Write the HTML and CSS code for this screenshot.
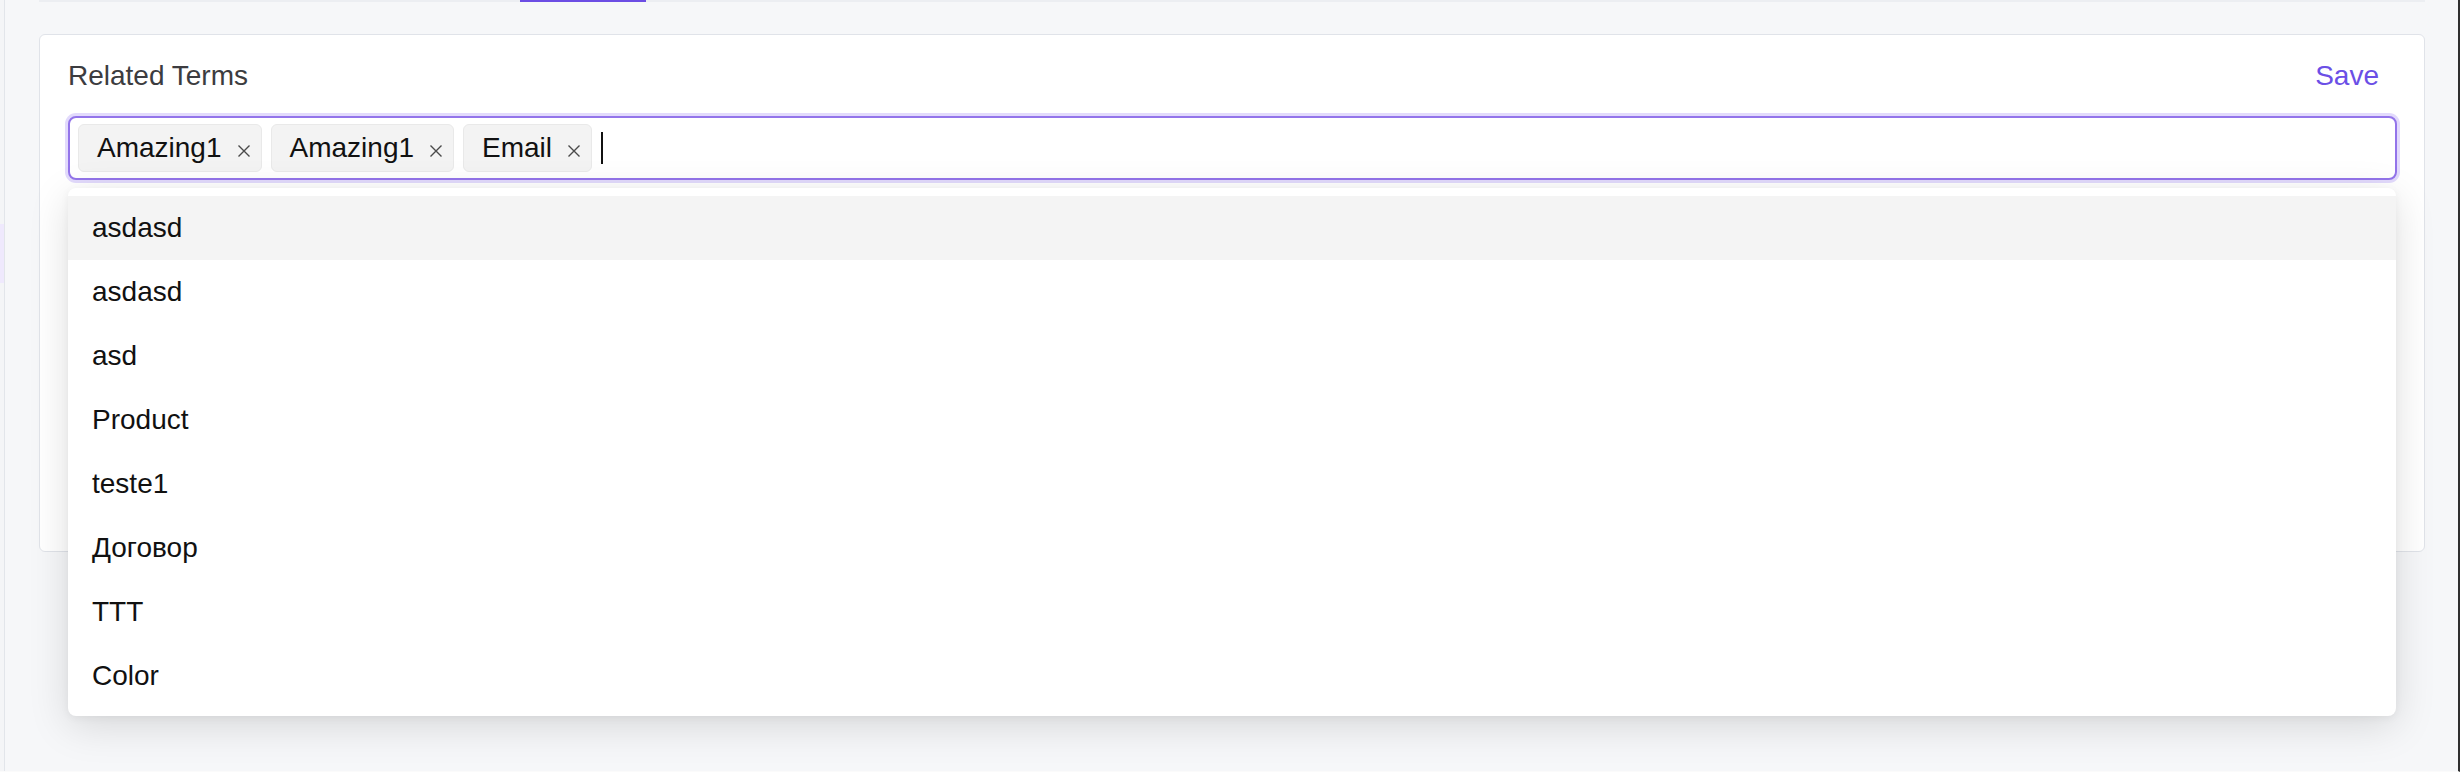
FILE: index.html
```html
<!DOCTYPE html>
<html lang="en">
<head>
<meta charset="utf-8">
<title>Related Terms</title>
<link rel="stylesheet" href="styles.css">
</head>
<body>
<div class="frame">
  <aside class="sidebar">
    <div class="sidebar-active"></div>
  </aside>
  <main class="main">
    <div class="tabs"><div class="tab-indicator"></div></div>
    <section class="card">
      <div class="card-header">
        <span class="card-title">Related Terms</span>
        <span class="save">Save</span>
      </div>
      <div class="tag-input">
        <span class="tag"><span class="tag-label">Amazing1</span><svg class="tag-x" width="14" height="14" viewBox="0 0 14 14"><path d="M1.5 1.5 L12.5 12.5 M12.5 1.5 L1.5 12.5" stroke="#4a4a4a" stroke-width="1.4" fill="none"/></svg></span>
        <span class="tag"><span class="tag-label">Amazing1</span><svg class="tag-x" width="14" height="14" viewBox="0 0 14 14"><path d="M1.5 1.5 L12.5 12.5 M12.5 1.5 L1.5 12.5" stroke="#4a4a4a" stroke-width="1.4" fill="none"/></svg></span>
        <span class="tag"><span class="tag-label">Email</span><svg class="tag-x" width="14" height="14" viewBox="0 0 14 14"><path d="M1.5 1.5 L12.5 12.5 M12.5 1.5 L1.5 12.5" stroke="#4a4a4a" stroke-width="1.4" fill="none"/></svg></span>
        <span class="caret"></span>
        <ul class="dropdown">
          <li class="option active">asdasd</li>
          <li class="option">asdasd</li>
          <li class="option">asd</li>
          <li class="option">Product</li>
          <li class="option">teste1</li>
          <li class="option">Договор</li>
          <li class="option">TTT</li>
          <li class="option">Color</li>
        </ul>
      </div>
    </section>
  </main>
</div>
</body>
</html>
```

FILE: styles.css
```css
html, body {
  margin: 0;
  padding: 0;
}
body {
  background: #f6f7f9;
  font-family: "Liberation Sans", Arial, sans-serif;
  font-size: 28px;
  color: #111;
  overflow: hidden;
}
.frame {
  display: flex;
  height: 772px;
  box-sizing: border-box;
  border-right: 2px solid #2f2f2f;
  border-bottom: 1px solid #fbfbfb;
}
.sidebar {
  width: 4px;
  flex: none;
  background: #f4f5f7;
  border-right: 1px solid #e2e5ea;
}
.sidebar-active {
  margin-top: 224px;
  height: 59px;
  background: #efe9fd;
}
.main {
  flex: 1;
  padding: 0 33px 0 34px;
}
.tabs {
  height: 2px;
  background: #eceef2;
  margin-bottom: 32px;
  display: flex;
}
.tab-indicator {
  margin-left: 481px;
  width: 126px;
  height: 2px;
  background: #6c4de4;
}
.card {
  background: #fff;
  border: 1px solid #e0e3e9;
  border-radius: 6px;
  box-sizing: border-box;
  min-height: 518px;
  padding: 25px 27px 0 28px;
}
.card-header {
  display: flex;
  justify-content: space-between;
  align-items: center;
  height: 32px;
  line-height: 32px;
  margin-bottom: 24px;
}
.card-title {
  color: #3c3c40;
}
.save {
  color: #6b4fe6;
  margin-right: 18px;
}
.tag-input {
  position: relative;
  display: flex;
  align-items: center;
  gap: 9px;
  height: 64px;
  box-sizing: border-box;
  border: 2px solid #9374ea;
  border-radius: 8px;
  box-shadow: 0 0 0 3px #e2dafc;
  padding: 0 8px;
  background: #fff;
}
.tag {
  display: flex;
  align-items: center;
  height: 48px;
  box-sizing: border-box;
  background: #f3f3f3;
  border: 1px solid #e9e9e9;
  border-radius: 6px;
  padding: 0 10px 0 18px;
  line-height: 46px;
  color: #111;
}
.tag-x {
  margin-left: 15px;
  margin-top: 5px;
  flex: none;
}
.caret {
  width: 2px;
  height: 32px;
  background: #111;
}
.dropdown {
  position: absolute;
  top: calc(100% + 10px);
  left: -2px;
  right: -1px;
  margin: 0;
  padding: 8px 0;
  list-style: none;
  background: #fff;
  border-radius: 8px;
  box-shadow: 0 10px 40px rgba(0, 0, 0, 0.13), 0 2px 8px rgba(0, 0, 0, 0.05);
  z-index: 10;
}
.option {
  height: 64px;
  line-height: 64px;
  padding: 0 24px;
  color: #111;
}
.option.active {
  background: #f4f4f4;
}
```
